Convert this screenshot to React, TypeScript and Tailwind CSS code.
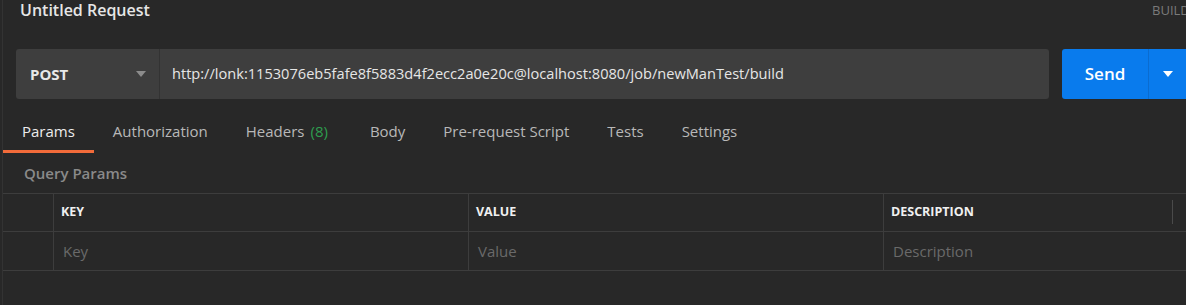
import React from "react";

const tabs = [
  { label: "Params", active: true },
  { label: "Authorization" },
  { label: "Headers", count: "(8)" },
  { label: "Body" },
  { label: "Pre-request Script" },
  { label: "Tests" },
  { label: "Settings" },
];

const Caret = ({ color }: { color: string }) => (
  <svg width="10" height="6" viewBox="0 0 10 6">
    <path d="M0 0 L10 0 L5 6 Z" fill={color} />
  </svg>
);

const App = () => {
  return (
    <div className="w-[1186px] h-[305px] bg-[#282828] overflow-hidden flex font-['Open_Sans',sans-serif]">
      <div className="w-[2px] shrink-0" />
      <div className="flex-1 flex flex-col border-l border-[#333333] min-w-0">
        {/* Title */}
        <div className="h-[22px] flex items-start justify-between pl-[17px]">
          <span className="text-[16px] font-semibold text-[#e6e6e6] leading-[20px]">Untitled Request</span>
          <span className="text-[13px] text-[#7a7a7a] leading-[20px] w-[34px] shrink-0 overflow-hidden whitespace-nowrap">BUILD</span>
        </div>

        {/* URL bar */}
        <div className="flex mt-[27px] pl-[13px] h-[50px]">
          <div className="w-[1033px] shrink-0 flex rounded-[3px] bg-[#3e3e3e] overflow-hidden">
            <div className="w-[144px] flex items-center justify-between pl-[14px] pr-[13px] border-r border-[#333333]">
              <span className="text-[15px] font-bold text-[#e8e8e8]">POST</span>
              <Caret color="#8c8c8c" />
            </div>
            <div className="flex-1 flex items-center pl-[12px] text-[14.6px] text-[#e6e6e6] whitespace-nowrap">
              http://lonk:1153076eb5fafe8f5883d4f2ecc2a0e20c@localhost:8080/job/newManTest/build
            </div>
          </div>
          <div className="ml-[13px] w-[124px] shrink-0 flex rounded-l-[3px] bg-[#097bed]">
            <div className="w-[87px] flex items-center justify-center text-[17px] font-semibold text-white border-r border-[#0a6cd0]">
              Send
            </div>
            <div className="flex-1 flex items-center justify-center">
              <Caret color="#ffffff" />
            </div>
          </div>
        </div>

        {/* Tabs */}
        <div className="flex mt-[14px] h-[40px]">
          {tabs.map((t) => (
            <div
              key={t.label}
              className={
                "px-[19px] flex items-center text-[15px] border-b-[3px] whitespace-nowrap " +
                (t.active ? "border-[#f26b3a] text-[#ececec]" : "border-transparent text-[#b8b8b8]")
              }
            >
              {t.label}
              {t.count && <span className="ml-[6px] mr-[4px] text-[#2e9e4f]">{t.count}</span>}
            </div>
          ))}
        </div>

        {/* Query params */}
        <div className="h-[40px] flex items-center pl-[21px] text-[15px] font-semibold text-[#8a8a8a]">
          Query Params
        </div>

        {/* Table */}
        <div className="border-t border-[#3d3d3d]">
          <div className="flex h-[38px] border-b border-[#3d3d3d]">
            <div className="w-[51px] border-r border-[#3d3d3d]" />
            <div className="w-[415px] border-r border-[#3d3d3d] flex items-center pl-[7px] text-[12.5px] font-bold text-[#f0f0f0]">KEY</div>
            <div className="w-[415px] border-r border-[#3d3d3d] flex items-center pl-[7px] text-[12.5px] font-bold text-[#f0f0f0]">VALUE</div>
            <div className="flex-1 flex items-center pl-[7px] text-[12.5px] font-bold text-[#f0f0f0] relative">
              DESCRIPTION
              <div className="absolute left-[288px] top-[6px] h-[24px] border-l border-[#4a4a4a]" />
            </div>
          </div>
          <div className="flex h-[39px] border-b border-[#3d3d3d]">
            <div className="w-[51px] border-r border-[#3d3d3d]" />
            <div className="w-[415px] border-r border-[#3d3d3d] flex items-center pl-[9px] text-[15px] text-[#6a6a6a]">Key</div>
            <div className="w-[415px] border-r border-[#3d3d3d] flex items-center pl-[9px] text-[15px] text-[#6a6a6a]">Value</div>
            <div className="flex-1 flex items-center pl-[9px] text-[15px] text-[#6a6a6a]">Description</div>
          </div>
        </div>
      </div>
    </div>
  );
};

export default App;
